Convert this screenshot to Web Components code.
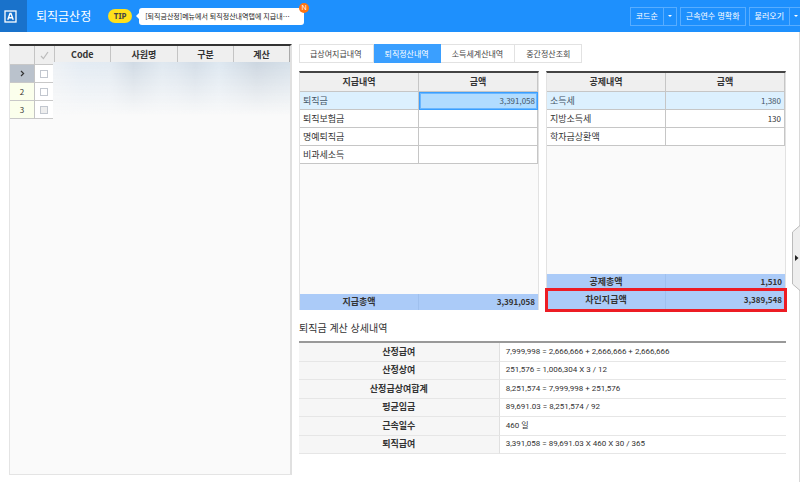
<!DOCTYPE html>
<html lang="ko">
<head>
<meta charset="utf-8">
<meta name="viewport" content="width=device-width, initial-scale=1">
<title>퇴직금산정</title>
<style>
  body {
    margin: 0;
    min-height: 100vh;
    display: flex;
    flex-direction: column;
    background: #fff;
    color: #333;
    font-family: "Noto Sans CJK KR", "Noto Sans", sans-serif;
    font-size: 9px;
    line-height: 12px;
  }
  main {
    flex: 1;
    display: grid;
    grid-template-columns: 283fr 487fr;
    gap: 7px;
    padding: 12px 13px 7px 9px;
    border-right: 1px solid #d8d8d8;
    position: relative;
  }
  .pair {
    display: grid;
    grid-template-columns: 1fr 1fr;
    gap: 7px;
    margin-top: 8px;
  }
  h2 {
    margin: 10px 0 5px;
    font-size: 10px;
    font-weight: 400;
    line-height: 16px;
  }
</style>
</head>
<body>
<app-header heading="퇴직금산정">
  <tip-bubble slot="tip">[퇴직금산정]메뉴에서 퇴직정산내역탭에 지급내…</tip-bubble>
  <tool-button split>코드순</tool-button>
  <tool-button>근속연수 명확화</tool-button>
  <tool-button split>불러오기</tool-button>
</app-header>
<main>
  <employee-grid></employee-grid>
  <section>
    <tab-bar tabs="급상여지급내역,퇴직정산내역,소득세계산내역,중간정산조회" active="1"></tab-bar>
    <div class="pair">
      <amount-grid id="pay" heading="지급내역" editing></amount-grid>
      <amount-grid id="deduct" heading="공제내역"></amount-grid>
    </div>
    <h2>퇴직금 계산 상세내역</h2>
    <detail-table></detail-table>
  </section>
  <side-handle></side-handle>
</main>

<script>
class AppHeader extends HTMLElement {
  constructor() {
    super();
    this.attachShadow({ mode: 'open' });
    this.shadowRoot.innerHTML = `
      <style>
        :host {
          display: flex;
          align-items: center;
          height: 32px;
          background: #1e90fd;
          color: #fff;
          overflow: hidden;
        }
        .logo {
          align-self: stretch;
          width: 27px;
          display: flex;
          align-items: center;
          background: #1972cb;
        }
        svg { width: 13px; height: 13px; margin-left: 4px; }
        h1 {
          margin: 0 17px 0 9px;
          font-size: 12px;
          font-weight: 400;
          line-height: 18px;
        }
        /* the last button runs on past the window edge */
        .tools {
          margin-left: auto;
          margin-right: -3px;
          display: flex;
          gap: 3px;
        }
      </style>
      <div class="logo">
        <svg viewBox="0 0 13 13" fill="none" stroke="#fff">
          <rect x="1" y="1" width="11" height="11" stroke-width="1.3"/>
          <path d="M3.8 9.8 6 3.5h1l2.2 6.3M4.7 7.7h3.6" stroke-width="1.4"/>
        </svg>
      </div>
      <h1></h1>
      <slot name="tip"></slot>
      <div class="tools"><slot></slot></div>
    `;
  }

  connectedCallback() {
    this.shadowRoot.querySelector('h1').textContent = this.getAttribute('heading');
  }
}

class TipBubble extends HTMLElement {
  constructor() {
    super();
    this.attachShadow({ mode: 'open' });
    this.shadowRoot.innerHTML = `
      <style>
        :host { display: flex; align-items: center; gap: 7px; }
        .tip {
          width: 24px;
          border-radius: 7px;
          background: #ffe11b;
          color: #444;
          font: 700 8px/14px "Noto Sans", sans-serif;
          text-align: center;
        }
        .bubble {
          position: relative;
          box-sizing: border-box;
          width: 165px;
          padding: 0 6px;
          border-radius: 3px;
          background: #fff;
          color: #222;
          font-size: 7px;
          line-height: 17px;
          white-space: nowrap;
        }
        .bubble::before {
          content: "";
          position: absolute;
          left: -3px;
          top: 5px;
          border: solid transparent;
          border-width: 3px 3px 3px 0;
          border-right-color: #fff;
        }
        .badge {
          position: absolute;
          top: -5px;
          right: -5px;
          width: 10px;
          border-radius: 50%;
          background: #ff7410;
          color: #fff;
          font: 7px/10px "Noto Sans", sans-serif;
          text-align: center;
        }
      </style>
      <span class="tip">TIP</span>
      <div class="bubble"><slot></slot><span class="badge">N</span></div>
    `;
  }
}

class ToolButton extends HTMLElement {
  constructor() {
    super();
    this.attachShadow({ mode: 'open' });
    this.shadowRoot.innerHTML = `
      <style>
        :host { display: flex; }
        button {
          height: 19px;
          padding: 0 5px;
          border: 1px solid #58adff;
          background: transparent;
          color: #fff;
          font: inherit;
          font-size: 8px;
          white-space: nowrap;
        }
        .arrow {
          width: 13px;
          padding: 0;
          border-left: 0;
          display: flex;
          align-items: center;
          justify-content: center;
        }
        .arrow::before {
          content: "";
          border: solid transparent;
          border-width: 2px 2px 0;
          border-top-color: #fff;
        }
      </style>
      <button type="button"><slot></slot></button>
      ${this.hasAttribute('split') ? '<button type="button" class="arrow" aria-label="더보기"></button>' : ''}
    `;
  }
}

class EmployeeGrid extends HTMLElement {
  constructor() {
    super();
    this.attachShadow({ mode: 'open' });
    this.shadowRoot.innerHTML = `
      <style>
        :host {
          display: block;
          box-sizing: border-box;
          border: 1px solid #e4e4e4;
          border-top: 2px solid #333;
          border-right: 2px solid #e0e0e0;
          background: #fafafa;
        }
        table {
          width: 100%;
          table-layout: fixed;
          border-collapse: separate;
          border-spacing: 0;
        }
        th, td {
          box-sizing: border-box;
          height: 18px;
          padding: 0;
          border-right: 1px solid #c4c4c4;
          border-bottom: 1px solid #c8c8c8;
          text-align: center;
        }
        thead th { height: 19px; background: #efefef; }
        thead th:last-child { border-right-color: #aaa; }
        tbody th { background: #fbffec; font-weight: 400; font-size: 8px; }
        tbody tr:first-child th { background: #bac2cc; }
        td { background: #fff; }
        .masked { position: relative; border: 0; background: none; }
        .veil {
          position: absolute;
          inset: -3px 0 0 -2px;
          background:
            linear-gradient(to bottom, transparent, #fafafa 95%),
            linear-gradient(to right, #edf1f5, #e3ebf3 12%, #e2eaf2 24%, #d0dae4 34%, #dfe8f0 46%, #dce5ee 52%, #d3dde7 60%, #dee8f1 70%, #ccd6e0 86%, #d6e0e9);
        }
        input {
          appearance: none;
          display: block;
          width: 8px;
          height: 8px;
          margin: 0 auto;
          border: 1px solid #c2c7cf;
          background: #fff;
        }
        input:disabled { background: #eee; }
        svg { display: block; margin: 0 auto; }
      </style>
      <table>
        <colgroup>
          <col style="width:9%"><col style="width:7%"><col style="width:20%">
          <col style="width:24%"><col style="width:20%"><col style="width:20%">
        </colgroup>
        <thead>
          <tr>
            <th></th>
            <th><svg width="9" height="9" viewBox="0 0 9 9" fill="none" stroke="#bbb" stroke-width="1.2"><path d="M1 5l2.4 2.6L8 1"/></svg></th>
            <th>Code</th><th>사원명</th><th>구분</th><th>계산</th>
          </tr>
        </thead>
        <tbody>
          <tr>
            <th><svg width="5" height="7" viewBox="0 0 5 7" fill="none" stroke="#333" stroke-width="1.2"><path d="M1 1l2.6 2.5L1 6"/></svg></th>
            <td><input type="checkbox" aria-label="1행 선택"></td>
            <td class="masked" colspan="4" rowspan="3"><div class="veil"></div></td>
          </tr>
          <tr><th>2</th><td><input type="checkbox" aria-label="2행 선택"></td></tr>
          <tr><th>3</th><td><input type="checkbox" aria-label="3행 선택" disabled></td></tr>
        </tbody>
      </table>
    `;
  }
}

class TabBar extends HTMLElement {
  constructor() {
    super();
    this.attachShadow({ mode: 'open' });
  }

  connectedCallback() {
    const active = Number(this.getAttribute('active'));
    const tabs = this.getAttribute('tabs').split(',');
    this.shadowRoot.innerHTML = `
      <style>
        :host { display: flex; }
        button {
          height: 19px;
          padding: 0 11px;
          border: 1px solid #e2e2e2;
          border-left-width: 0;
          background: #fff;
          color: #444;
          font: inherit;
          font-size: 8px;
          white-space: nowrap;
        }
        button:first-of-type { border-left-width: 1px; padding-left: 10px; }
        button[aria-selected="true"] {
          border-color: #3a9fff;
          background: #3a9fff;
          color: #fff;
        }
      </style>
      ${tabs.map((tab, i) => `<button type="button" role="tab" aria-selected="${i === active}">${tab}</button>`).join('')}
    `;
    this.setAttribute('role', 'tablist');
  }
}

class AmountGrid extends HTMLElement {
  constructor() {
    super();
    this.attachShadow({ mode: 'open' });
  }

  // data: { rows: [[name, amount]], totals: [[name, amount, marked]] }
  set data(data) {
    this.shadowRoot.innerHTML = this.getTemplate(data);
  }

  getTemplate({ rows, totals }) {
    return `
      <style>
        :host {
          display: flex;
          flex-direction: column;
          justify-content: space-between;
          box-sizing: border-box;
          min-height: 239px;
          border: 1px solid #e2e2e2;
          border-top: 2px solid #444;
          border-bottom: 0;
          background: #fafafa;
        }
        table {
          width: 100%;
          table-layout: fixed;
          border-collapse: separate;
          border-spacing: 0;
        }
        th, td {
          box-sizing: border-box;
          height: 18px;
          padding: 0 3px;
          border-right: 1px solid #c6c6c6;
          border-bottom: 1px solid #c6c6c6;
        }
        td { background: #fff; }
        thead th { height: 19px; background: #efefef; }
        .num { font-size: 8px; text-align: right; }
        .items tr:first-child td { background: #dcf0fe; color: #456; }
        :host([editing]) .items tr:first-child .num {
          padding-right: 2px;
          border: 1px solid #3a9fff;
          background: #b1dcff;
          box-shadow: inset 0 0 0 1px #6bb7ff;
        }
        .totals th, .totals td {
          height: 16px;
          border-bottom: 0;
          border-right-color: #9fc0ee;
          background: #abcbf8;
          font-weight: 700;
        }
        .totals tr :last-child { border-right: 0; }
        .totals .marked > * { height: 20px; }
        .marked { outline: 3px solid #ed1c24; outline-offset: -1px; }
      </style>
      <table>
        <thead><tr><th>${this.getAttribute('heading')}</th><th>금액</th></tr></thead>
        <tbody class="items">
          ${rows.map(([name, amount]) => `<tr><td>${name}</td><td class="num">${amount}</td></tr>`).join('')}
        </tbody>
      </table>
      <table class="totals">
        ${totals.map(([name, amount, marked]) => `
          <tr class="${marked ? 'marked' : ''}"><th>${name}</th><td class="num">${amount}</td></tr>`).join('')}
      </table>
    `;
  }
}

class DetailTable extends HTMLElement {
  constructor() {
    super();
    this.attachShadow({ mode: 'open' });
  }

  set rows(rows) {
    this.shadowRoot.innerHTML = `
      <style>
        :host { display: block; border-top: 2px solid #999; }
        table {
          width: 100%;
          height: 111px;
          table-layout: fixed;
          border-collapse: separate;
          border-spacing: 0;
        }
        th, td { padding: 0; border-bottom: 1px solid #e6e6e6; }
        th { width: 41%; background: #f6f6f6; border-right: 1px solid #e0e0e0; }
        td {
          padding-left: 6px;
          font-family: Roboto, "Noto Sans CJK KR", sans-serif;
          font-size: 8px;
        }
      </style>
      <table>
        ${rows.map(([name, formula]) => `<tr><th>${name}</th><td>${formula}</td></tr>`).join('')}
      </table>
    `;
  }
}

class SideHandle extends HTMLElement {
  constructor() {
    super();
    this.attachShadow({ mode: 'open' });
    this.shadowRoot.innerHTML = `
      <style>
        :host { display: block; position: absolute; right: -1px; top: 193px; }
        button { display: block; padding: 0; border: 0; background: none; }
        svg { display: block; }
      </style>
      <button type="button" aria-label="패널 펼치기">
        <svg width="8" height="66" viewBox="0 0 8 66">
          <path d="M8 .5 .5 7v52L8 65.5" fill="#eee" stroke="#bbb"/>
          <path d="M3 30l3.5 3L3 36z" fill="#222"/>
        </svg>
      </button>
    `;
  }
}

customElements.define('app-header', AppHeader);
customElements.define('tip-bubble', TipBubble);
customElements.define('tool-button', ToolButton);
customElements.define('employee-grid', EmployeeGrid);
customElements.define('tab-bar', TabBar);
customElements.define('amount-grid', AmountGrid);
customElements.define('detail-table', DetailTable);
customElements.define('side-handle', SideHandle);

document.querySelector('#pay').data = {
  rows: [['퇴직금', '3,391,058'], ['퇴직보험금', ''], ['명예퇴직금', ''], ['비과세소득', '']],
  totals: [['지급총액', '3,391,058']]
};
document.querySelector('#deduct').data = {
  rows: [['소득세', '1,380'], ['지방소득세', '130'], ['학자금상환액', '']],
  totals: [['공제총액', '1,510'], ['차인지급액', '3,389,548', true]]
};
document.querySelector('detail-table').rows = [
  ['산정급여', '7,999,998 = 2,666,666 + 2,666,666 + 2,666,666'],
  ['산정상여', '251,576 = 1,006,304 X 3 / 12'],
  ['산정급상여합계', '8,251,574 = 7,999,998 + 251,576'],
  ['평균임금', '89,691.03 = 8,251,574 / 92'],
  ['근속일수', '460 일'],
  ['퇴직급여', '3,391,058 = 89,691.03 X 460 X 30 / 365']
];
</script>
</body>
</html>
